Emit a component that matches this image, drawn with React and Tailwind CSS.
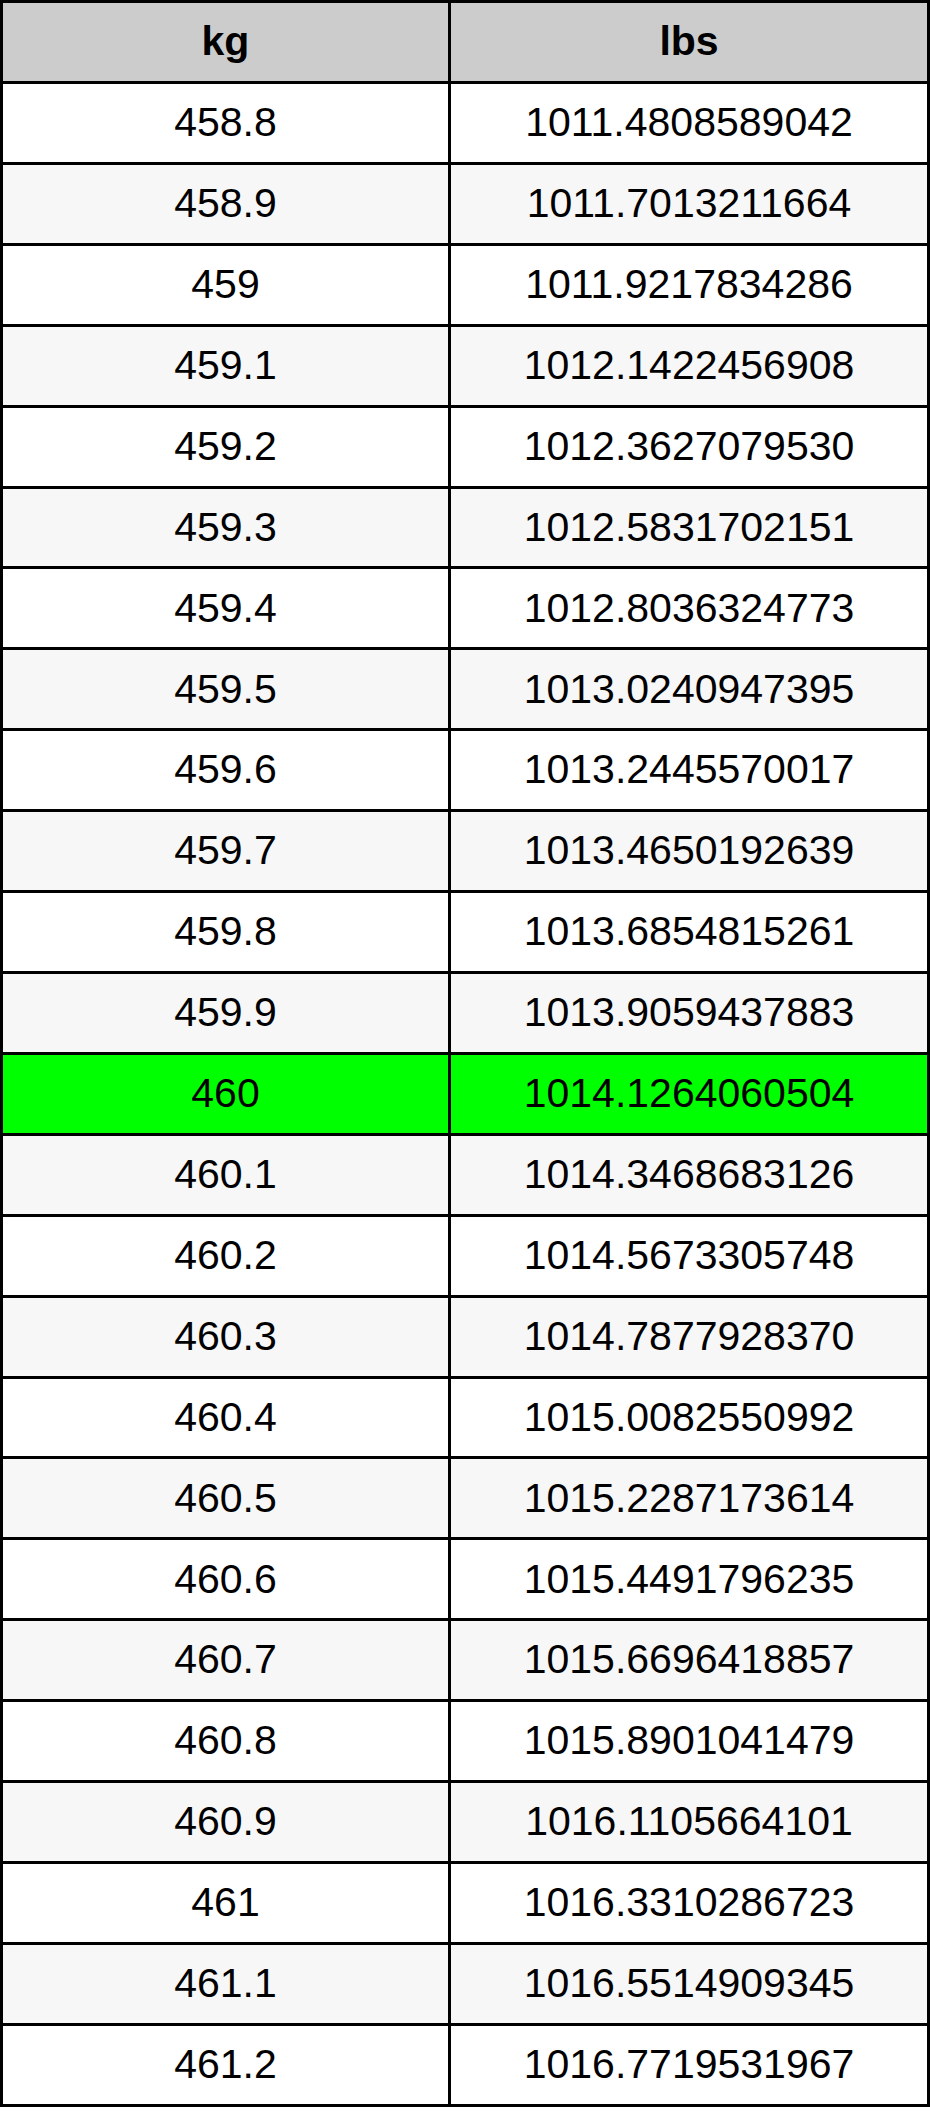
const ROWS = [
  ['458.8', '1011.4808589042'],
  ['458.9', '1011.7013211664'],
  ['459', '1011.9217834286'],
  ['459.1', '1012.1422456908'],
  ['459.2', '1012.3627079530'],
  ['459.3', '1012.5831702151'],
  ['459.4', '1012.8036324773'],
  ['459.5', '1013.0240947395'],
  ['459.6', '1013.2445570017'],
  ['459.7', '1013.4650192639'],
  ['459.8', '1013.6854815261'],
  ['459.9', '1013.9059437883'],
  ['460', '1014.1264060504'],
  ['460.1', '1014.3468683126'],
  ['460.2', '1014.5673305748'],
  ['460.3', '1014.7877928370'],
  ['460.4', '1015.0082550992'],
  ['460.5', '1015.2287173614'],
  ['460.6', '1015.4491796235'],
  ['460.7', '1015.6696418857'],
  ['460.8', '1015.8901041479'],
  ['460.9', '1016.1105664101'],
  ['461', '1016.3310286723'],
  ['461.1', '1016.5514909345'],
  ['461.2', '1016.7719531967']
];

export default function App() {
  return (
    <div className="h-[2115px] w-[930px] bg-white font-['Liberation_Sans',Arial,sans-serif] text-[41px] text-black">
      <div className="border-[3px] border-black">
        <div className="flex h-[78px] bg-[#cccccc] font-bold">
          <div className="flex w-[445px] items-center justify-center">kg</div>
          <div className="flex flex-1 items-center justify-center border-l-[3px] border-black">lbs</div>
        </div>
        {ROWS.map(([kg, lbs], i) => (
          <div
            key={kg}
            className={
              'flex h-[80.92px] border-t-[3px] border-black ' +
              (kg === '460' ? 'bg-[#00ff00]' : i % 2 === 1 ? 'bg-[#f7f7f7]' : 'bg-white')
            }
          >
            <div className="flex w-[445px] items-center justify-center">{kg}</div>
            <div className="flex flex-1 items-center justify-center border-l-[3px] border-black">{lbs}</div>
          </div>
        ))}
      </div>
    </div>
  );
}
